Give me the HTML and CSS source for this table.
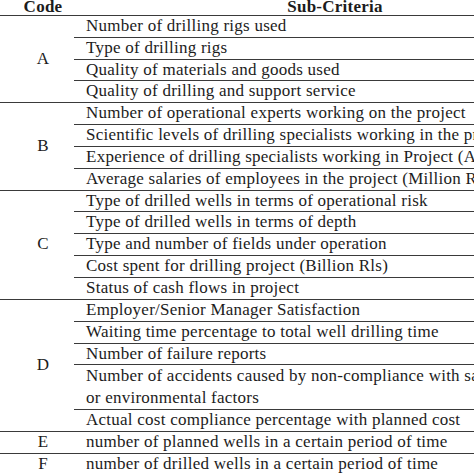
FILE: index.html
```html
<!DOCTYPE html>
<html lang="en">
<head>
<meta charset="utf-8">
<title>Criteria table</title>
<link rel="stylesheet" href="styles.css">
</head>
<body>
<div class="frame">
<table class="criteria">
  <colgroup><col class="col-code"><col class="col-sub"></colgroup>
  <thead>
    <tr><th class="code">Code</th><th class="sub">Sub-Criteria</th></tr>
  </thead>
  <tbody>
    <tr><td class="code" rowspan="4">A</td><td class="sub">Number of drilling rigs used</td></tr>
    <tr><td class="sub">Type of drilling rigs</td></tr>
    <tr><td class="sub">Quality of materials and goods used</td></tr>
    <tr><td class="sub">Quality of drilling and support service</td></tr>
  </tbody>
  <tbody>
    <tr><td class="code" rowspan="4">B</td><td class="sub">Number of operational experts working on the project</td></tr>
    <tr><td class="sub">Scientific levels of drilling specialists working in the project</td></tr>
    <tr><td class="sub">Experience of drilling specialists working in Project (Average years)</td></tr>
    <tr><td class="sub">Average salaries of employees in the project (Million Rls)</td></tr>
  </tbody>
  <tbody>
    <tr><td class="code" rowspan="5">C</td><td class="sub">Type of drilled wells in terms of operational risk</td></tr>
    <tr><td class="sub">Type of drilled wells in terms of depth</td></tr>
    <tr><td class="sub">Type and number of fields under operation</td></tr>
    <tr><td class="sub">Cost spent for drilling project (Billion Rls)</td></tr>
    <tr><td class="sub">Status of cash flows in project</td></tr>
  </tbody>
  <tbody>
    <tr><td class="code" rowspan="5">D</td><td class="sub">Employer/Senior Manager Satisfaction</td></tr>
    <tr><td class="sub">Waiting time percentage to total well drilling time</td></tr>
    <tr><td class="sub">Number of failure reports</td></tr>
    <tr><td class="sub two">Number of accidents caused by non-compliance with safety standards<br>or environmental factors</td></tr>
    <tr><td class="sub">Actual cost compliance percentage with planned cost</td></tr>
  </tbody>
  <tbody>
    <tr><td class="code">E</td><td class="sub">number of planned wells in a certain period of time</td></tr>
  </tbody>
  <tbody>
    <tr><td class="code">F</td><td class="sub">number of drilled wells in a certain period of time</td></tr>
  </tbody>
</table>
</div>
</body>
</html>
```

FILE: styles.css
```css
html, body {
  margin: 0;
  padding: 0;
  background: #ffffff;
}

.frame {
  width: 474px;
  height: 474px;
  overflow: hidden;
}

.criteria {
  border-collapse: collapse;
  width: 596px;
  margin-top: -6px;
  font-family: "Liberation Serif", "Times New Roman", serif;
  font-size: 17px;
  letter-spacing: 0.25px;
  color: #1c1c1c;
  table-layout: fixed;
}

.col-code { width: 74px; }
.col-sub { width: 522px; }

.criteria th,
.criteria td {
  padding: 0;
  line-height: 20.85px;
  border-bottom: 1px solid #3a3a3a;
  white-space: nowrap;
}

.criteria th {
  font-weight: bold;
  text-align: center;
  padding-top: 6px;
  line-height: 14.85px;
}

.criteria th.code,
.criteria td.code {
  text-align: center;
  padding-left: 12px;
  vertical-align: middle;
}

.criteria td.sub {
  text-align: left;
  padding-left: 12px;
}

.criteria td.two {
  line-height: 21.85px;
}
```
